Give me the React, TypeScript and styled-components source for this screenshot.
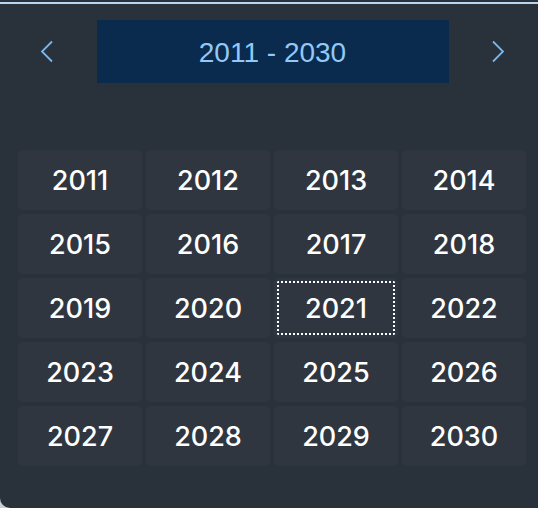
import styled, { createGlobalStyle } from "styled-components";

const GlobalStyle = createGlobalStyle`
  html, body {
    margin: 0;
    padding: 0;
    background: #c7ced6;
  }
  body {
    font-family: "Inter", "Lato", sans-serif;
  }
`;

const Popover = styled.div`
  width: 538px;
  height: 508px;
  box-sizing: border-box;
  background: #29313a;
  border-radius: 0 0 0 10px;
  padding-top: 2px;
  display: flex;
  flex-direction: column;
`;

const TopLine = styled.div`
  height: 2px;
  background: #b9d6f0;
`;

const Header = styled.div`
  display: flex;
  align-items: center;
  justify-content: space-between;
  padding: 16px 14px 0 21px;
  height: 63px;
`;

const NavButton = styled.button`
  width: 52px;
  height: 63px;
  border: none;
  background: transparent;
  display: flex;
  align-items: center;
  justify-content: center;
  padding: 0;
  cursor: pointer;
`;

const RangeButton = styled.button`
  width: 352px;
  height: 63px;
  border: none;
  background: #0a2b4d;
  color: #92c9f6;
  font-family: "Liberation Sans", Arial, sans-serif;
  font-size: 28px;
  padding: 3px 0 0;
  cursor: pointer;
`;

const Grid = styled.div`
  display: grid;
  grid-template-columns: repeat(4, 124px);
  grid-auto-rows: 60px;
  gap: 4px;
  padding: 67px 0 0 18px;
`;

const YearCell = styled.button<{ $focused?: boolean }>`
  border: none;
  border-radius: 5px;
  background: #2f3640;
  color: #ffffff;
  font-family: "Inter", "Lato", sans-serif;
  font-weight: 500;
  font-size: 27px;
  padding: 0;
  cursor: pointer;
  outline: ${({ $focused }) => ($focused ? "2px dotted #ffffff" : "none")};
  outline-offset: -5px;
`;

const Chevron = ({ dir }: { dir: "left" | "right" }) => (
  <svg width="14" height="24" viewBox="0 0 14 24" fill="none">
    <path
      d={dir === "left" ? "M12 1.5 L2 11.5 L12 21.5" : "M2 1.5 L12 11.5 L2 21.5"}
      stroke="#7bb7ec"
      strokeWidth="1.8"
    />
  </svg>
);

const years = Array.from({ length: 20 }, (_, i) => 2011 + i);

const App = () => {
  return (
    <>
      <GlobalStyle />
      <Popover>
        <TopLine />
        <Header>
          <NavButton type="button">
            <Chevron dir="left" />
          </NavButton>
          <RangeButton type="button">2011 - 2030</RangeButton>
          <NavButton type="button">
            <Chevron dir="right" />
          </NavButton>
        </Header>
        <Grid>
          {years.map((y) => (
            <YearCell key={y} type="button" $focused={y === 2021}>
              {y}
            </YearCell>
          ))}
        </Grid>
      </Popover>
    </>
  );
};

export default App;
